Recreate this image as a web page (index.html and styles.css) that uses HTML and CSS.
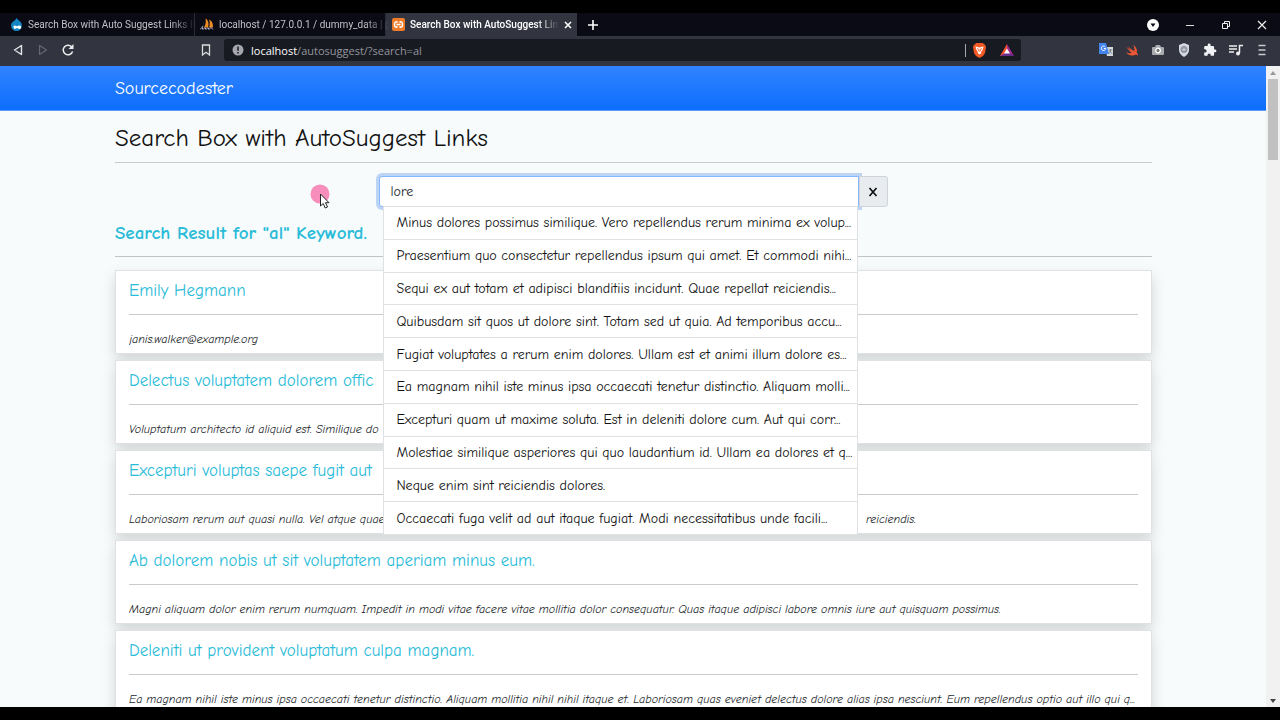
FILE: index.html
```html
<!DOCTYPE html>
<html lang="en">
<head>
<meta charset="utf-8">
<title>Search Box with AutoSuggest Links</title>
<link rel="stylesheet" href="styles.css">
</head>
<body>
<div class="browser">
  <header class="tabs">
    <div class="tab tab-first">
      <svg class="favicon" viewBox="0 0 12 12" aria-hidden="true"><path d="M6 0c1 2 5 3 5 7a5 5 0 0 1-10 0c0-4 4-4 5-7z" fill="#1687c5"/><path d="M3 8c2-3 3 1 5-1 3-1 3 4 0 3-2-2-3 1-4 0z" fill="#fff"/></svg>
      <span class="tab-title">Search Box with Auto Suggest Links It</span>
    </div>
    <div class="tab">
      <svg class="favicon favicon-wide" viewBox="0 0 14 12" aria-hidden="true"><path d="M5.500 0C9 2 9 6 8 9H4c2-3 2-6 1.500-9zM9 1c4 2 4 5 4 8H9c1-3 1-5 0-8z" fill="#f08a24"/><path d="M4 3c0 3-1 5-3 6h2z" fill="#b9bdc8"/><path d="M0 11l2-2 1 2 2-2 1 2 2-2 1 2 2-2 2 2" fill="none" stroke="#aeb2c4"/></svg>
      <span class="tab-title">localhost / 127.0.0.1 / dummy_data | p</span>
    </div>
    <div class="tab tab-active">
      <svg class="favicon" viewBox="0 0 13 13" aria-hidden="true"><rect width="13" height="13" rx="2" fill="#f07c2a"/><path d="M5.500 4.500C4 3 2.500 4 2.500 6.500S4 10 5.500 8.500M7.500 4.500C9 3 10.500 4 10.500 6.500S9 10 7.500 8.500M4.500 6.500h4" fill="none" stroke="#fff" stroke-width="1.500"/></svg>
      <span class="tab-title">Search Box with AutoSuggest Lin</span>
      <button class="icon-button" aria-label="Close tab"><svg width="8" height="8" viewBox="0 0 8 8"><path d="M1 1l6 6M7 1L1 7" stroke="#fff" stroke-width="1.500"/></svg></button>
    </div>
    <button class="icon-button new-tab" aria-label="New tab"><svg width="10" height="10" viewBox="0 0 10 10"><path d="M5 0v10M0 5h10" stroke="#fff" stroke-width="1.600"/></svg></button>
    <div class="window-controls">
      <button class="icon-button" aria-label="Search tabs"><svg width="12" height="12" viewBox="0 0 12 12"><circle cx="6" cy="6" r="6" fill="#fff"/><path d="M3.500 4.500h5L6 8z" fill="#0b0c16"/></svg></button>
      <button class="icon-button" aria-label="Minimize"><svg width="10" height="10" viewBox="0 0 10 10"><path d="M1 5.500h8" stroke="#ddd"/></svg></button>
      <button class="icon-button" aria-label="Restore"><svg width="10" height="10" viewBox="0 0 10 10" fill="none" stroke="#eee"><path d="M1.500 3.500h5v5h-5zM3.500 3.500v-2h5v5h-2"/></svg></button>
      <button class="icon-button" aria-label="Close window"><svg width="10" height="10" viewBox="0 0 10 10"><path d="M1 1l8 8M9 1L1 9" stroke="#eee" stroke-width="1.200"/></svg></button>
    </div>
  </header>
  <div class="toolbar">
    <div class="nav-buttons">
      <button class="icon-button" aria-label="Back"><svg width="12" height="12" viewBox="0 0 12 12"><path d="M9.500 1.500v9L2.500 6z" fill="none" stroke="#e4e5ea" stroke-width="1.400" stroke-linejoin="round"/></svg></button>
      <button class="icon-button" aria-label="Forward" disabled><svg width="12" height="12" viewBox="0 0 12 12"><path d="M2.500 1.500v9L9.500 6z" fill="none" stroke="#656774" stroke-width="1.200" stroke-linejoin="round"/></svg></button>
      <button class="icon-button" aria-label="Reload"><svg width="12" height="12" viewBox="0 0 12 12"><path d="M10 3.200A4.800 4.800 0 1 0 10.600 7.500" fill="none" stroke="#eee" stroke-width="1.500"/><path d="M11.500 0v5h-5z" fill="#eee"/></svg></button>
    </div>
    <button class="icon-button bookmark" aria-label="Bookmark"><svg width="10" height="12" viewBox="0 0 10 12"><path d="M1.500 1h7v10L5 8.300 1.500 11z" fill="none" stroke="#ddd" stroke-width="1.300"/></svg></button>
    <div class="address">
      <svg width="12" height="12" viewBox="0 0 12 12" aria-hidden="true"><circle cx="6" cy="6" r="5.500" fill="#a5a7ad"/><path d="M6 2.500v4.300M6 8v1.500" stroke="#181a22" stroke-width="1.500"/></svg>
      <span class="url"><b>localhost</b>/autosuggest/?search=al</span>
      <span class="address-rule"></span>
      <svg width="13" height="15" viewBox="0 0 13 15" aria-hidden="true"><path d="M3 0h7l1 1.500h1L13 4l-1 6-2 3-3.500 2L3 13l-2-3-1-6 1-2.500h1z" fill="#f15a24"/><path d="M2.500 3.500l4 1 4-1-1 3.500-1.500 2 .5 1-2 1.500L4.500 10l.5-1L3.500 7z" fill="#fff"/><path d="M4 5.500l2 1-.5 1.500h2L7 6.500l2-1" fill="none" stroke="#f15a24" stroke-width=".8"/></svg>
      <svg class="bat" width="14" height="12" viewBox="0 0 14 12" aria-hidden="true"><path d="M7 0L0 12h7z" fill="#f4512c"/><path d="M7 0l7 12-7-4z" fill="#a3278f"/><path d="M0 12h14L7 8z" fill="#662d91"/><path d="M7 4.500L10 9.500H4z" fill="#fff"/></svg>
    </div>
    <div class="extensions">
      <svg viewBox="0 0 14 14" aria-hidden="true"><path d="M6 4h8v9H8z" fill="#d5d9dc"/><path d="M0 0h7l3 11H0z" fill="#4384ee"/><path d="M6.300 4A2.200 2.200 0 1 0 6.700 5.500H4.800" fill="none" stroke="#fff"/><path d="M9.500 7h4M11.500 6v1c0 2-1 3-2 4m1-3l3 3" fill="none" stroke="#65777c" stroke-width=".8"/></svg>
      <svg viewBox="0 0 14 14" aria-hidden="true"><path d="M8 1.500c3.500 2.500 4.500 5.500 3.700 8 1.300 1.500 1.200 2.500 1 3.200-1-1.200-2-1.200-3-.7-3.500 1.500-7 0-8.700-3 2 1.300 4.200 1.600 5.800.8C4.500 8 2.700 5.800 1.500 4c1.500 1.300 3 2.400 4.500 3.300C5 6.200 3.800 4.800 3 3.300c2 1.900 4 3.500 6.300 5 .4-2.300-.1-4.800-1.300-6.800z" fill="#ee5634"/></svg>
      <svg viewBox="0 0 14 14" aria-hidden="true"><path d="M4 4l1-2h4l1 2h2q1 0 1 1v6q0 1-1 1H2q-1 0-1-1V5q0-1 1-1z" fill="#a8aaae"/><circle cx="7" cy="7.500" r="2.300" fill="#777" stroke="#fff" stroke-width="1.300"/></svg>
      <svg viewBox="0 0 14 14" aria-hidden="true"><path d="M7 0l5 2v5q0 4-5 7-5-3-5-7V2z" fill="#d4d7df"/><circle cx="7" cy="6.500" r="3" fill="#a0a5b2" stroke="#858b99"/><path d="M6 6.500h2" stroke="#e9eaf0"/></svg>
      <svg viewBox="0 0 24 24" aria-hidden="true"><path d="M20.500 11H19V7a2 2 0 0 0-2-2h-4V3.500a2.500 2.500 0 0 0-5 0V5H4a2 2 0 0 0-2 2v3.800h1.500a2.700 2.700 0 0 1 0 5.400H2V20a2 2 0 0 0 2 2h3.800v-1.500a2.700 2.700 0 0 1 5.400 0V22H17a2 2 0 0 0 2-2v-4h1.500a2.500 2.500 0 0 0 0-5z" fill="#f2f3f7"/></svg>
      <svg viewBox="0 0 14 14" aria-hidden="true"><path d="M0 3h8M0 6h8M0 9h5" stroke="#eee" stroke-width="1.500"/><path d="M10.500 10V2.500H14" fill="none" stroke="#eee" stroke-width="1.500"/><circle cx="9" cy="10.500" r="2" fill="#eee"/></svg>
      <svg viewBox="0 0 14 14" aria-hidden="true"><path d="M3.500 2.500h7M3.500 7h7M3.500 11.500h7" stroke="#c6c8cd" stroke-width="1.300"/></svg>
    </div>
  </div>
  <div class="viewport">
    <div class="page">
      <nav class="navbar"><div class="container"><a class="brand" href="#">Sourcecodester</a></div></nav>
      <main class="container">
        <h1 class="page-title">Search Box with AutoSuggest Links</h1>
        <form class="search">
          <input class="search-input" type="text" aria-label="Search" value="lore">
          <button class="clear" type="button" aria-label="Clear"><svg width="10" height="10" viewBox="0 0 10 10"><path d="M1.500 1l7 8M8.500 1l-7 8" stroke="#111" stroke-width="1.700"/></svg></button>
          <div class="suggestions">
            <a href="#">Minus dolores possimus similique. Vero repellendus rerum minima ex volup...</a>
            <a href="#">Praesentium quo consectetur repellendus ipsum qui amet. Et commodi nihi...</a>
            <a href="#">Sequi ex aut totam et adipisci blanditiis incidunt. Quae repellat reiciendis...</a>
            <a href="#">Quibusdam sit quos ut dolore sint. Totam sed ut quia. Ad temporibus accu...</a>
            <a href="#">Fugiat voluptates a rerum enim dolores. Ullam est et animi illum dolore es...</a>
            <a href="#">Ea magnam nihil iste minus ipsa occaecati tenetur distinctio. Aliquam molli...</a>
            <a href="#">Excepturi quam ut maxime soluta. Est in deleniti dolore cum. Aut qui corr...</a>
            <a href="#">Molestiae similique asperiores qui quo laudantium id. Ullam ea dolores et q...</a>
            <a href="#">Neque enim sint reiciendis dolores.</a>
            <a href="#">Occaecati fuga velit ad aut itaque fugiat. Modi necessitatibus unde facili...</a>
          </div>
        </form>
        <h2 class="result-title">Search Result for "al" Keyword.</h2>
        <div class="results">
          <article class="card"><h3><a href="#">Emily Hegmann</a></h3><p>janis.walker@example.org</p></article>
          <article class="card"><h3><a href="#">Delectus voluptatem dolorem offic</a></h3><p>Voluptatum architecto id aliquid est. Similique do</p></article>
          <article class="card"><h3><a href="#">Excepturi voluptas saepe fugit aut</a></h3><p class="split"><span>Laboriosam rerum aut quasi nulla. Vel atque quae</span><span>reiciendis.</span></p></article>
          <article class="card"><h3><a href="#">Ab dolorem nobis ut sit voluptatem aperiam minus eum.</a></h3><p>Magni aliquam dolor enim rerum numquam. Impedit in modi vitae facere vitae mollitia dolor consequatur. Quas itaque adipisci labore omnis iure aut quisquam possimus.</p></article>
          <article class="card"><h3><a href="#">Deleniti ut provident voluptatum culpa magnam.</a></h3><p>Ea magnam nihil iste minus ipsa occaecati tenetur distinctio. Aliquam mollitia nihil nihil itaque et. Laboriosam quas eveniet delectus dolore alias ipsa nesciunt. Eum repellendus optio aut illo qui q...</p></article>
        </div>
      </main>
    </div>
    <div class="scrollbar">
      <svg width="6" height="4" viewBox="0 0 6 4" aria-hidden="true"><path d="M0 4l3-4 3 4z" fill="#999"/></svg>
      <div class="thumb"></div>
      <svg width="6" height="4" viewBox="0 0 6 4" aria-hidden="true"><path d="M0 0h6L3 4z" fill="#444"/></svg>
    </div>
  </div>
  <svg class="pointer" width="22" height="28" viewBox="0 0 22 28" aria-hidden="true"><circle cx="10" cy="10" r="9.500" fill="#f78dba"/><path d="M10.500 10v12l2.700-2.500 2 4.500 2.300-1-2-4.300H19z" fill="#fff" stroke="#222"/></svg>
</div>
</body>
</html>
```
FILE: styles.css
```css
* { box-sizing: border-box; }
body { margin: 0; background: #000; font-family: "Comic Neue", "Comic Sans MS", "Open Sans", sans-serif; color: #212529; }
a { color: inherit; text-decoration: none; }
.browser { height: 100vh; padding: 13px 0; display: flex; flex-direction: column; overflow: hidden; }
.icon-button { display: inline-flex; align-items: center; justify-content: center; padding: 0; border: 0; background: none; }

.tabs { display: flex; height: 23px; flex: none; background: #0a0b15; font-family: Roboto, sans-serif; font-size: 10px; color: #bfc1c8; }
.tab { display: flex; align-items: center; gap: 5px; width: 191px; padding: 0 5px; border-right: 1px solid #2a2b36; }
.tab-first { width: 195px; padding-left: 10px; }
.tab-active { background: #32343f; color: #fff; font-weight: 500; border: 0; padding-left: 6px; }
.tab-title { flex: 1; white-space: nowrap; mask-image: linear-gradient(to right, #000 85%, transparent); }
.favicon { width: 13px; height: 13px; flex: none; }
.favicon-wide { width: 14px; }
.new-tab { width: 32px; }
.window-controls { display: flex; align-items: center; gap: 26px; margin-left: auto; padding-right: 13px; }

.toolbar { display: flex; align-items: center; height: 30px; flex: none; background: #32343f; padding: 0 10px 2px 12px; }
.nav-buttons { display: flex; gap: 13px; }
.bookmark { margin-left: 127px; }
.address { display: flex; align-items: center; gap: 7px; flex: 1; height: 22px; margin: 0 78px 0 13px; padding: 0 7px 0 8px; background: #181a22; border-radius: 3px; font-family: "Open Sans", sans-serif; font-size: 11px; color: #93959c; }
.url { flex: 1; }
.url b { font-weight: 400; color: #fff; }
.address-rule { width: 1px; height: 13px; background: #a5a7ad; }
.bat { margin-left: 7px; }
.extensions { display: flex; gap: 12px; }
.extensions svg { width: 14px; height: 14px; }
.extensions svg:last-child { margin-right: 1px; }

.viewport { flex: 1; min-height: 0; display: flex; }
.page { flex: 1; min-width: 0; overflow: hidden; background: #f7fbfc; }
.container { width: 82%; margin: 0 auto; padding-left: 1px; }
.navbar { height: 45px; display: flex; align-items: center; background: linear-gradient(#3183ff, #0d6efd); border-bottom: 1px solid #5b9cf8; }
.brand { color: #fff; font-size: 18px; }
.page-title { margin: 0 0 13px; height: 52px; line-height: 54px; border-bottom: 1px solid #c8cdce; font-size: 25px; font-weight: 400; color: #111; }
.search { position: relative; z-index: 2; display: flex; width: 49%; height: 31px; margin: 0 auto; }
.search-input { flex: 1; min-width: 0; padding: 0 10px; border: 1px solid #86b7fe; border-radius: 3px 0 0 3px; box-shadow: 0 0 0 3px #bdd5f4; background: #fff; color: #212529; font: inherit; font-size: 14px; outline: 0; }
.clear { width: 29px; padding: 0; display: flex; align-items: center; justify-content: center; border: 1px solid #ced4da; border-radius: 0 3px 3px 0; background: #e9ecef; }
.suggestions { position: absolute; top: 30px; left: 4px; right: 30px; display: flex; flex-direction: column; height: 329px; border: 1px solid #dfe1e3; background: #fff; }
.suggestions a { flex: 1; display: flex; align-items: center; padding: 0 4px 0 12px; border-top: 1px solid #dfe1e3; font-size: 14px; color: #111; white-space: nowrap; overflow: hidden; }
.suggestions a:first-child { border-top: 0; }
.result-title { margin: 0 0 13px; height: 50px; line-height: 52px; border-bottom: 1px solid #bfc5c6; font-size: 19px; font-weight: 700; color: #29bbd8; }
.results { display: flex; flex-direction: column; gap: 6px; }
.card { height: 84px; padding: 0 13px; border: 1px solid #dfe1e3; background: #fff; box-shadow: 0 6px 13px rgba(0, 0, 0, .15); }
.card h3 { margin: 0; height: 44px; line-height: 40px; border-bottom: 1px solid #c9cbcc; font-size: 17px; font-weight: 400; color: #29bbd8; }
.card p { margin: 13px 0 0; line-height: 22px; font-size: 12px; font-style: italic; white-space: nowrap; overflow: hidden; text-overflow: ellipsis; }
.card .split { display: flex; justify-content: space-between; width: 78%; }

.scrollbar { width: 14px; display: flex; flex-direction: column; align-items: center; gap: 4px; padding: 5px 0 4px; background: #f1f1f1; }
.thumb { width: 10px; height: 81px; margin-bottom: auto; background: #c1c1c1; }
.pointer { position: absolute; left: 310px; top: 184px; z-index: 3; }
```
